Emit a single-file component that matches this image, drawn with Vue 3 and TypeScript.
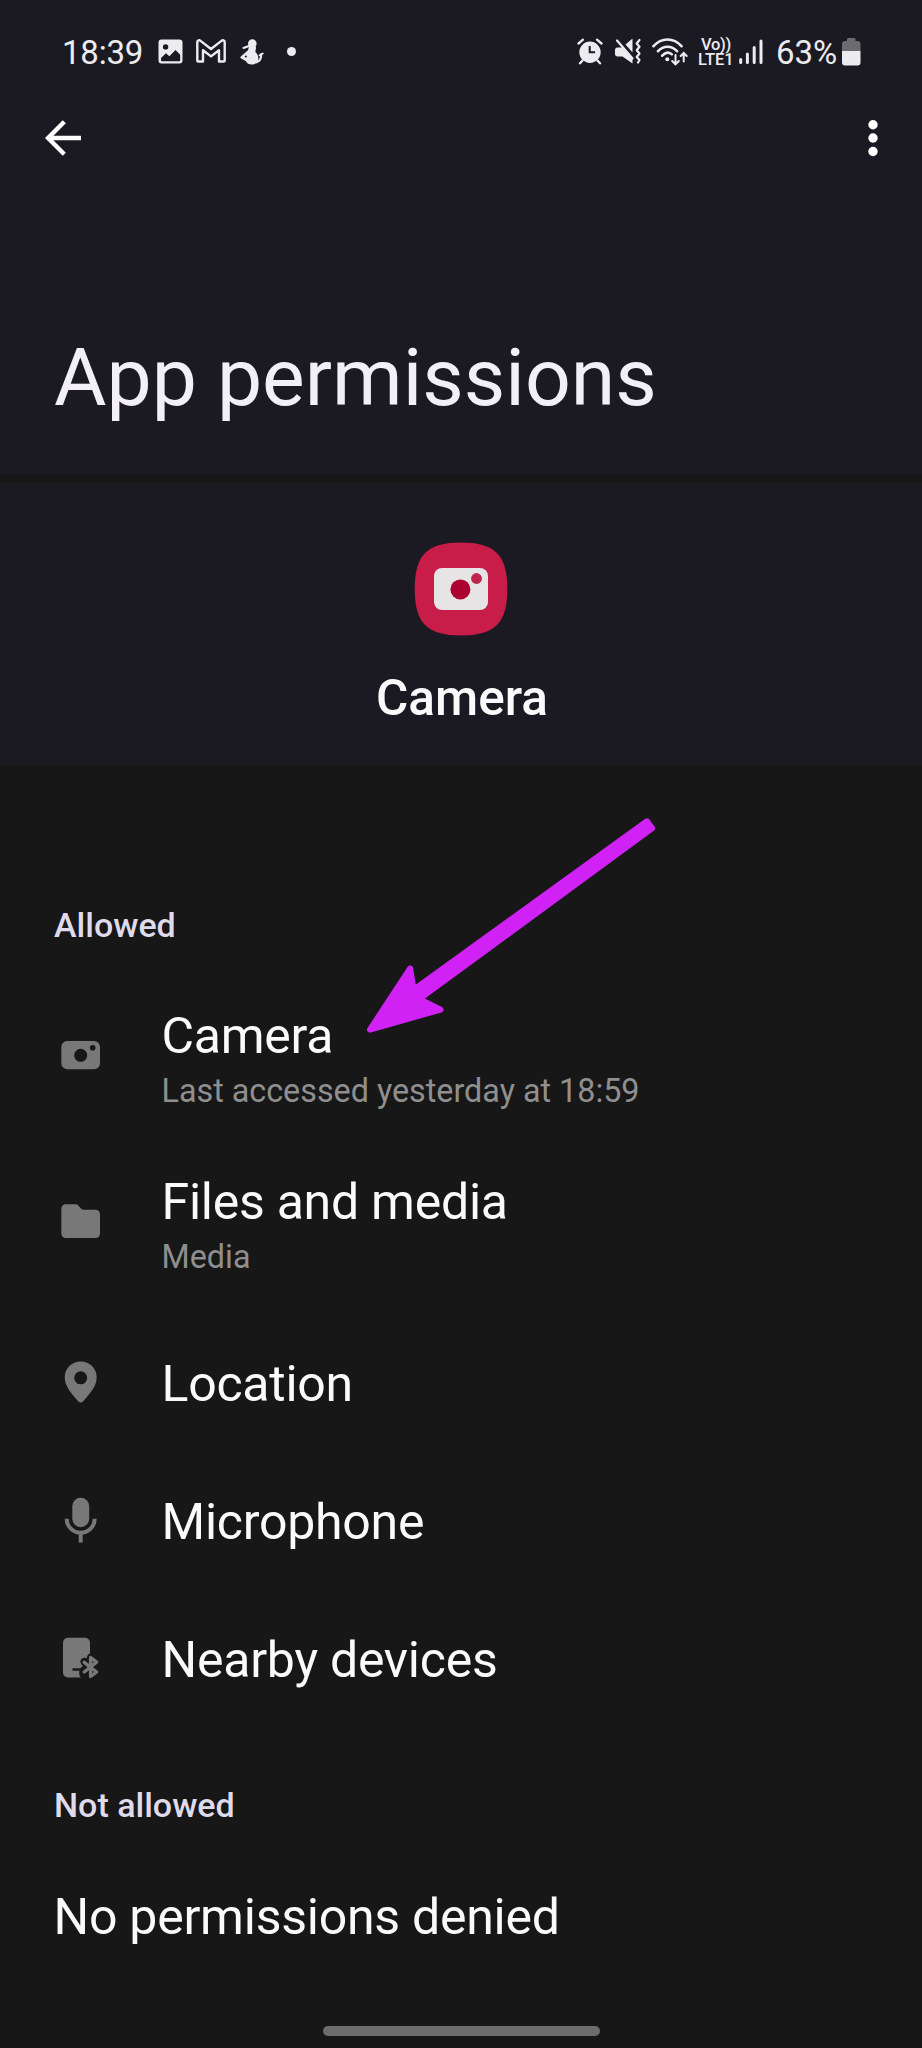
<script setup lang="ts">
interface Permission {
  id: string
  title: string
  detail?: string
}

const allowed: Permission[] = [
  { id: 'camera', title: 'Camera', detail: 'Last accessed yesterday at 18:59' },
  { id: 'files', title: 'Files and media', detail: 'Media' },
  { id: 'location', title: 'Location' },
  { id: 'microphone', title: 'Microphone' },
  { id: 'nearby', title: 'Nearby devices' },
]
</script>

<template>
  <div class="screen">
    <header class="header">
      <div class="status">
        <div class="status-left">
          <span class="clock">18:39</span>
          <svg class="st-image" width="26" height="26" viewBox="0 0 26 26">
            <path fill-rule="evenodd" d="M3.5 0.5h18a3 3 0 0 1 3 3v18a3 3 0 0 1-3 3h-18a3 3 0 0 1-3-3v-18a3 3 0 0 1 3-3zM3 21c0 .9.6 1.3 1.3 1.3h16.600c.8 0 1.300-.5 1.300-1.300v-5.200l-4.700-4.700-6.200 6.200-3.300-3.100L3 19z M7.600 5.200a2.700 2.700 0 1 0 0 5.400 2.700 2.700 0 0 0 0-5.400z" />
          </svg>
          <svg class="st-mail" width="30" height="24" viewBox="0 0 30 24">
            <path fill="none" stroke="currentColor" stroke-width="2.400" stroke-linejoin="round" d="M1.300 3.200v18c0 .9.500 1.300 1.300 1.300h4.400V11.200l8 6.200 8-6.200v11.300h4.400c.8 0 1.300-.4 1.300-1.300v-18c0-2-2-2.400-3.300-1.300L15 10 4.600 1.900C3.300.8 1.300 1.200 1.300 3.200z" />
          </svg>
          <svg class="st-figure" width="24" height="26" viewBox="0 0 24 26">
            <circle cx="12.300" cy="4.600" r="4.300" />
            <path d="M9 7.500h7c.3 2-.8 3.600-.6 5.500 2 1.700 3 4 3 6.500 0 3.500-3 6-6.700 6-2.800 0-4.700-1.200-5.700-3.300L.8 19.300c-.6-.5-.6-1.200 0-1.800L8 11.300z" />
            <path fill="none" stroke="currentColor" stroke-width="2" stroke-linecap="round" stroke-linejoin="round" d="M3.500 9l6-2.200M16 23.500c3.300-.8 5.500-3.800 5.200-8.500M22.700 14.500l-3 1.800" />
            <circle cx="5.800" cy="17.600" r="1" fill="#1b1a22" />
          </svg>
          <span class="dot"></span>
        </div>
        <div class="status-right">
          <svg class="st-alarm" width="26" height="27" viewBox="0 0 26 27">
            <path fill-rule="evenodd" d="M13 3.500a10.700 10.700 0 1 0 0 21.400 10.700 10.700 0 0 0 0-21.400zM11.700 8v7.200h6.400v-2H13.700V8z" />
            <path fill="none" stroke="currentColor" stroke-width="2.300" stroke-linecap="round" d="M1.500 5.500 6 1.700M24.500 5.500 20 1.700M5.500 22.500 3 25.300M20.500 22.500 23 25.300" />
          </svg>
          <svg class="st-mute" width="27" height="27" viewBox="0 0 27 27">
            <path d="M2.500 9.500H7l10.500 11.800V25.500L7.500 18.500H2.500C1 18.500 0 17.500 0 16v-4c0-1.500 1-2.500 2.500-2.500zM10.500 6.500l7-6v14z" />
            <path fill="none" stroke="currentColor" stroke-width="2.200" stroke-linecap="round" stroke-linejoin="round" d="M2 2.500l15.500 18M24.500 2l-2.800 3.500 2.800 3.200-2.800 3.500 2.800 3.300-2.800 3.500 2.800 3-1.500 2.500" />
          </svg>
          <svg class="st-wifi" width="36" height="28" viewBox="0 0 36 28">
            <path fill="none" stroke="currentColor" stroke-width="2.600" stroke-linecap="round" d="M1.500 8.200C9.500-.8 21.500-.8 29.500 8.200M6 13.200c5.500-6 13.500-6 19 0M10.200 17.700c3-3.400 6.500-3.700 9.500-1.500" />
            <circle cx="15.300" cy="21.200" r="2" />
            <path fill="none" stroke="currentColor" stroke-width="2" stroke-linecap="round" d="M23.500 17v9M20.200 23l3.300 3.300 3.300-3.300M31.700 23.500v-8.500M28.700 18l3-3 3 3" />
          </svg>
          <div class="volte"><span>Vo))</span><span>LTE1</span></div>
          <svg class="st-signal" width="24" height="26" viewBox="0 0 24 26">
            <path fill="none" stroke="currentColor" stroke-width="3" stroke-linecap="round" d="M1.700 20.500v3M8.400 15v8.500M15.200 8.500v15M22 2v21.500" />
          </svg>
          <span class="percent">63%</span>
          <svg class="st-battery" width="19" height="28" viewBox="0 0 19 28">
            <path fill="#6c6b70" d="M0 13V6a3 3 0 0 1 3-3h2V1.500C5 .6 5.600 0 6.500 0h5.500c.9 0 1.500.6 1.500 1.500V3h2a3 3 0 0 1 3 3v7z" />
            <path d="M0 13h18.500v11.500a3 3 0 0 1-3 3H3a3 3 0 0 1-3-3z" />
          </svg>
        </div>
      </div>
      <nav class="toolbar">
        <svg width="38" height="36" viewBox="0 0 38 36">
          <path fill="none" stroke="#fff" stroke-width="4.400" stroke-linejoin="miter" d="M20.300 1.800 4.100 18l16.200 16.200M4.100 18H37" />
        </svg>
        <svg width="10" height="37" viewBox="0 0 10 37" fill="#fff">
          <circle cx="5" cy="4.700" r="4.700" /><circle cx="5" cy="18" r="4.700" /><circle cx="5" cy="31.500" r="4.700" />
        </svg>
      </nav>
      <h1>App permissions</h1>
    </header>

    <section class="app-card">
      <svg width="94" height="94" viewBox="0 0 94 94">
        <path fill="#c71d48" d="M47 .5C81 .5 93.300 13 93.300 47S81 93.500 47 93.500.700 81 .700 47 13 .5 47 .5z" />
        <rect x="20" y="26" width="54" height="42" rx="8" fill="#e6e4e4" />
        <circle cx="46.400" cy="47.400" r="10" fill="#ac0030" />
        <circle cx="62.500" cy="36.500" r="5.400" fill="#c0234d" />
      </svg>
      <h2>Camera</h2>
    </section>

    <main>
      <h3 class="allowed">Allowed</h3>
      <ul>
        <li v-for="item in allowed" :key="item.id" :class="{ double: item.detail }">
          <svg class="icon" width="48" height="48" viewBox="0 0 48 48">
            <path v-if="item.id === 'camera'" fill-rule="evenodd" d="M10.300 10h26.700a6 6 0 0 1 6 6v16.300a6 6 0 0 1-6 6H10.300a6 6 0 0 1-6-6V16a6 6 0 0 1 6-6zM23.700 17.800a6.500 6.500 0 1 0 0 13 6.500 6.500 0 0 0 0-13zM35.700 13.900a2.800 2.800 0 1 0 0 5.600 2.800 2.800 0 0 0 0-5.600z" />
            <path v-else-if="item.id === 'files'" d="M8.800 7.300h9.500c1.200 0 2 .3 2.800 1.100l3 3.100c.7.800 1.400 1.200 2.500 1.200h11.900a4.500 4.500 0 0 1 4.500 4.500V36.500a4.500 4.500 0 0 1-4.500 4.500H8.800a4.500 4.500 0 0 1-4.500-4.500V11.800a4.500 4.500 0 0 1 4.500-4.500z" />
            <path v-else-if="item.id === 'location'" fill-rule="evenodd" d="M23.700 3.500c-9 0-16 7-16 15.800 0 8.700 6.300 15.700 13.500 24 1.500 1.600 3.500 1.600 5 0 7.200-8.300 13.500-15.300 13.500-24 0-8.800-7-15.800-16-15.800zM23.700 13.300a6.500 6.500 0 1 1 0 13 6.500 6.500 0 0 1 0-13z" />
            <template v-else-if="item.id === 'microphone'">
              <rect x="15.300" y="1.800" width="16.900" height="29.400" rx="8.450" />
              <path fill="none" stroke="currentColor" stroke-width="4" d="M9.700 22.800a14 14 0 0 0 28 0M23.700 36v10.500" />
            </template>
            <template v-else>
              <path d="M11 3.800h17a5 5 0 0 1 5 5V19.500c-2 .6-3 2-3 4.500-2.500-.8-4.800-.3-6 1.600-1.300 2-.5 4.200 1.800 6.400L23.500 34.200H15.500v2.600h7c-.6 2.600-.3 4.700 1.200 6.700H11a5 5 0 0 1-5-5V8.800a5 5 0 0 1 5-5z" />
              <path fill="none" stroke="currentColor" stroke-width="3.400" stroke-linejoin="round" stroke-linecap="round" d="M27.200 28.300 39.600 38l-6 4.500v-19l6 4.700L27.200 38" />
            </template>
          </svg>
          <div class="labels">
            <span class="title">{{ item.title }}</span>
            <span v-if="item.detail" class="detail">{{ item.detail }}</span>
          </div>
        </li>
      </ul>
      <h3 class="denied">Not allowed</h3>
      <p class="none">No permissions denied</p>
    </main>

    <svg class="pointer" width="296" height="222" viewBox="0 0 296 222">
      <path fill="#d122f6" stroke="#d122f6" stroke-width="6" stroke-linejoin="round" d="M283 7.300 49.500 176 46.200 154.500 6 215.600 76.500 195.600 56.500 185.800 57.500 183.400 288 14.300z" />
    </svg>
    <div class="home-bar"></div>
  </div>
</template>

<style>
body {
  margin: 0;
  background: #171717;
}
</style>

<style scoped>
.screen {
  position: relative;
  display: flex;
  flex-direction: column;
  width: 922px;
  height: 2048px;
  overflow: hidden;
  background: #171717;
  color: #fafafa;
  font-family: Roboto, "Liberation Sans", sans-serif;
}
h1, h2, h3, p, ul {
  margin: 0;
  padding: 0;
  font-weight: 400;
}
svg {
  display: block;
  flex: none;
}
.header {
  box-sizing: border-box;
  height: 475px;
  background: #1b1a22;
}
.status {
  display: flex;
  justify-content: space-between;
  height: 104px;
  padding: 0 61px 0 62px;
  color: #ececf0;
  fill: currentColor;
}
.status-left, .status-right {
  display: flex;
  align-items: flex-start;
}
.clock, .percent {
  margin-top: 33px;
  font-size: 33px;
  line-height: 40px;
}
.clock {
  width: 96px;
  letter-spacing: -0.200px;
}
.st-image { margin-top: 39px; }
.st-mail { margin: 39px 0 0 12px; }
.st-figure { margin: 39px 0 0 14px; }
.dot {
  width: 9px;
  height: 9px;
  margin: 47px 0 0 23px;
  border-radius: 50%;
  background: currentColor;
}
.st-alarm { margin-top: 38px; }
.st-mute { margin: 38px 0 0 12px; }
.st-wifi { margin: 38px 0 0 10px; }
.volte {
  display: flex;
  flex-direction: column;
  width: 36px;
  margin: 37px 0 0 10px;
  font-size: 16.500px;
  font-weight: 500;
  line-height: 15px;
}
.volte span:first-child { padding-left: 3px; letter-spacing: -0.300px; }
.st-signal { margin: 39px 0 0 5px; }
.percent {
  width: 64px;
  margin-left: 13px;
}
.st-battery { margin: 38px 0 0 2px; }
.toolbar {
  display: flex;
  justify-content: space-between;
  align-items: center;
  height: 68px;
  padding: 0 44px 0 44px;
}
h1 {
  margin: 158px 0 0 54px;
  font-size: 80.500px;
  line-height: 96px;
  color: #f2f0f6;
}
.app-card {
  display: flex;
  flex-direction: column;
  align-items: center;
  box-sizing: border-box;
  height: 282px;
  margin-top: 8px;
  padding-top: 59px;
  background: #1b1a22;
}
h2 {
  margin: 33px 0 0 2px;
  font-size: 49.500px;
  font-weight: 500;
  line-height: 58px;
}
h3 {
  padding-left: 54px;
  font-size: 34px;
  font-weight: 500;
  line-height: 40px;
  color: #dfdbec;
}
.allowed {
  margin-top: 140px;
}
ul {
  margin-top: 38px;
  list-style: none;
}
li {
  display: flex;
  align-items: center;
  box-sizing: border-box;
  height: 138px;
  padding-left: 57px;
}
li.double {
  align-items: flex-start;
  height: 166px;
  padding-top: 24px;
}
.icon {
  margin: 0 56.500px 5px 0;
  color: #787878;
  fill: currentColor;
}
.double .icon {
  margin-top: 24px;
}
.labels {
  display: flex;
  flex-direction: column;
  gap: 7px;
}
.title, .none {
  font-size: 50px;
  line-height: 58px;
  letter-spacing: -0.250px;
}
.detail {
  font-size: 32.300px;
  line-height: 38px;
  color: #8f8f8f;
}
.denied {
  margin-top: 56px;
}
.none {
  margin: 63px 0 0 53.500px;
}
.pointer {
  position: absolute;
  left: 364px;
  top: 814px;
}
.home-bar {
  position: absolute;
  left: 322.500px;
  top: 2026px;
  width: 277px;
  height: 10px;
  border-radius: 5px;
  background: #6c6c6c;
}
</style>
